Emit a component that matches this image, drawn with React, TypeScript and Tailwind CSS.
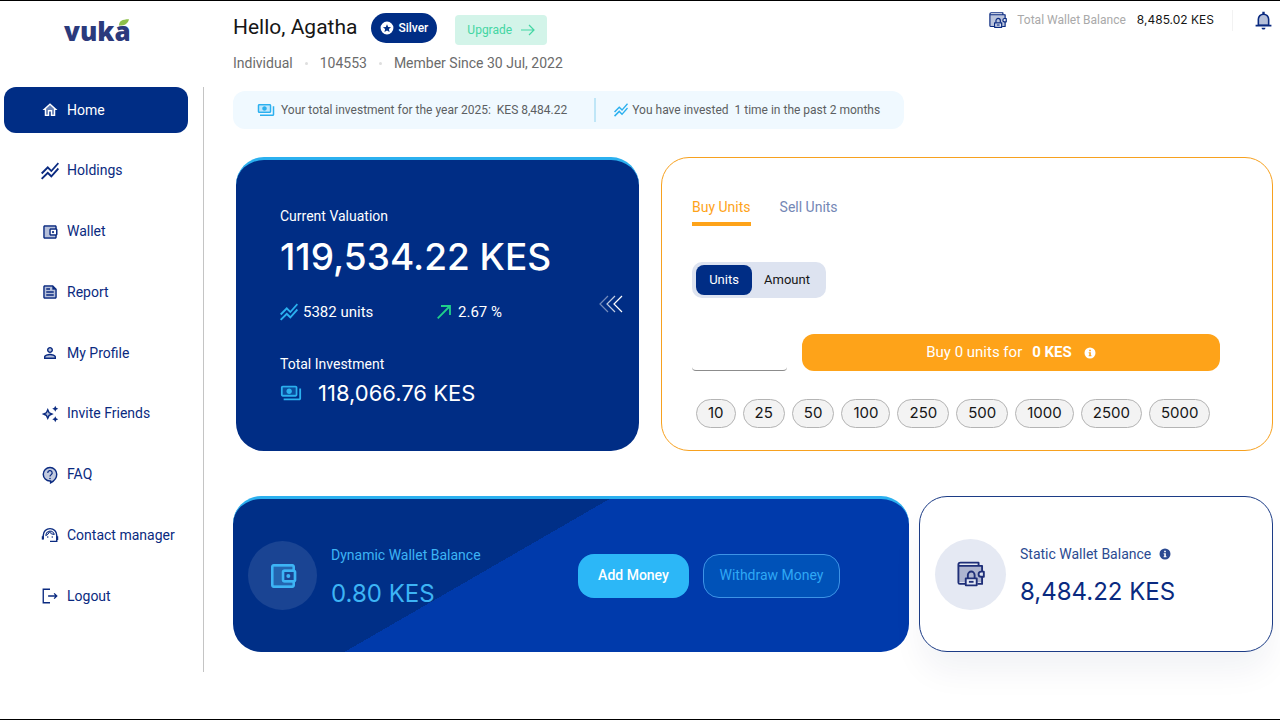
import { useState, type ReactNode } from 'react';

type IconProps = { className?: string };

function Svg({ className, children }: { className?: string; children: ReactNode }) {
  return (
    <svg viewBox="0 0 24 24" fill="currentColor" className={className} aria-hidden="true">
      {children}
    </svg>
  );
}

function HomeIcon({ className }: IconProps) {
  return (
    <Svg className={className}>
      <path opacity=".4" d="M12 5.7l-5 4.5V18h2v-6h6v6h2v-7.8z" />
      <path d="M12 3L2 12h3v8h6v-6h2v6h6v-8h3L12 3zm5 15h-2v-6H9v6H7v-7.81l5-4.5 5 4.5V18z" />
    </Svg>
  );
}

function ChartIcon({ className }: IconProps) {
  return (
    <svg viewBox="2 2 20 20" fill="currentColor" className={className} aria-hidden="true">
      <path d="M2 19.99l7.5-7.51 4 4 7.09-7.97L22 9.92l-8.5 9.56-4-4-6 6.01-1.5-1.5zm1.5-4.5l6-6.01 4 4L22 3.92l-1.41-1.41-7.09 7.97-4-4L2 13.99l1.5 1.5z" />
    </svg>
  );
}

function WalletIcon({ className }: IconProps) {
  return (
    <Svg className={className}>
      <path opacity=".3" d="M5 5v14h14v-2h-6a2 2 0 0 1-2-2V9c0-1.1.9-2 2-2h6V5z" />
      <path d="M21 7.28V5c0-1.1-.9-2-2-2H5c-1.11 0-2 .9-2 2v14c0 1.1.89 2 2 2h14c1.1 0 2-.9 2-2v-2.28c.59-.35 1-.98 1-1.72V9c0-.74-.41-1.38-1-1.72zM20 9v6h-7V9h7zM5 19V5h14v2h-6c-1.1 0-2 .9-2 2v6c0 1.1.9 2 2 2h6v2H5z" />
      <circle cx="16" cy="12" r="1.5" />
    </Svg>
  );
}

function ReportIcon({ className }: IconProps) {
  return (
    <Svg className={className}>
      <path opacity=".3" d="M5 5v14h14V9h-4V5z" />
      <path d="M16 3H5c-1.1 0-2 .9-2 2v14c0 1.1.9 2 2 2h14c1.1 0 2-.9 2-2V8l-5-5zm3 16H5V5h10v4h4v10zM7 17h10v-2H7v2zm5-10H7v2h5V7zm-5 6h10v-2H7v2z" />
    </Svg>
  );
}

function PersonIcon({ className }: IconProps) {
  return (
    <Svg className={className}>
      <path opacity=".3" d="M12 14c-3 0-6.500 1.500-6.500 3v1.500h13V17c0-1.500-3.500-3-6.500-3z" />
      <circle opacity=".3" cx="12" cy="8" r="2.500" />
      <path d="M12 5.900c1.160 0 2.100.94 2.100 2.100s-.94 2.100-2.100 2.100S9.900 9.160 9.900 8s.94-2.100 2.100-2.100m0 9c2.970 0 6.100 1.460 6.100 2.100v1.100H5.900V17c0-.64 3.130-2.100 6.100-2.100M12 4C9.790 4 8 5.790 8 8s1.790 4 4 4 4-1.790 4-4-1.790-4-4-4zm0 9c-2.670 0-8 1.340-8 4v3h16v-3c0-2.660-5.330-4-8-4z" />
    </Svg>
  );
}

function SparkleIcon({ className }: IconProps) {
  return (
    <Svg className={className}>
      <path opacity=".3" d="M9 8.800l1 2.200 2.200 1-2.200 1-1 2.200-1-2.200-2.200-1 2.200-1z" />
      <path d="M19 9l1.250-2.750L23 5l-2.750-1.250L19 1l-1.250 2.750L15 5l2.750 1.250L19 9zm0 6l-1.250 2.750L15 19l2.750 1.250L19 23l1.250-2.750L23 19l-2.750-1.250L19 15zm-7.500-5.500L9 4 6.500 9.500 1 12l5.500 2.500L9 20l2.500-5.500L17 12l-5.500-2.500zm-1.510 3.490L9 15.170l-.99-2.180L5.830 12l2.180-.99L9 8.830l.99 2.180 2.180.99-2.180.99z" />
    </Svg>
  );
}

function HelpIcon({ className }: IconProps) {
  return (
    <Svg className={className}>
      <path
        d="M12 2a9 9 0 1 0 0 18h.8v2.500c4.700-2.500 8.200-6.500 8.200-11.500a9 9 0 0 0-9-9z"
        fillOpacity=".25"
        stroke="currentColor"
        strokeWidth="1.900"
      />
      <path
        d="M9 9.200a2.950 2.950 0 1 1 4.500 2.400c-1 .600-1.500 1.200-1.500 2.400"
        fill="none"
        stroke="currentColor"
        strokeWidth="1.600"
      />
      <circle cx="12" cy="16.600" r="1.100" />
    </Svg>
  );
}

function AgentIcon({ className }: IconProps) {
  return (
    <Svg className={className}>
      <path opacity=".25" d="M6 12a6 6 0 0 1 12 0c-3 0-5-1.500-6-4-1 2.500-3 4-6 4z" />
      <g fill="none" stroke="currentColor" strokeWidth="1.900">
        <path d="M3 18v-5.500a9 9 0 0 1 18 0V20.500h-9" />
        <path d="M2 13.500v4.500M22 13.500v5" />
        <path d="M6.300 12.800a5.800 5.800 0 0 1 11.400-1.600c-3.200 0-5.400-1.400-6.400-3.600-.8 2.400-2.400 4.300-5 5.200z" strokeWidth="1.300" />
      </g>
      <circle cx="9" cy="14.500" r="1" />
      <circle cx="15" cy="14.500" r="1" />
    </Svg>
  );
}

function LogoutIcon({ className }: IconProps) {
  return (
    <Svg className={className}>
      <g fill="none" stroke="currentColor" strokeWidth="1.800">
        <path d="M12 3H3v18h9" />
        <path d="M9.500 12H21M17.500 8.500L21 12l-3.500 3.500" />
      </g>
    </Svg>
  );
}

function CashIcon({ className }: IconProps) {
  return (
    <Svg className={className}>
      <path opacity=".25" d="M3 6h14v8H3z" />
      <path d="M19 14V6c0-1.100-.9-2-2-2H3c-1.100 0-2 .9-2 2v8c0 1.100.9 2 2 2h14c1.100 0 2-.9 2-2zm-2 0H3V6h14v8zm-7-7c-1.660 0-3 1.340-3 3s1.340 3 3 3 3-1.340 3-3-1.340-3-3-3zm13 0v11c0 1.100-.9 2-2 2H4v-2h17V7h2z" />
    </Svg>
  );
}

function LockedWalletIcon({ className }: IconProps) {
  return (
    <Svg className={className}>
      <path opacity=".28" d="M1.500 4.500h20V19h-20z" />
      <g fill="none" stroke="currentColor" strokeWidth="1.600" strokeLinejoin="round">
        <path d="M7.500 20.500h-5a1.300 1.300 0 0 1-1.300-1.300V4c0-1 .8-1.700 1.800-1.700h15.500V5" />
        <path d="M1.500 5h20v5M21.500 14.500v6h-4" />
        <path d="M23 10h-2.300a2.200 2.200 0 0 0 0 4.400H23z" fill="#e3e8f4" />
        <path d="M9.300 15.500v-2.700a2.900 2.900 0 0 1 5.800 0v2.700" />
        <path d="M7.500 15.700h9.400v6H7.500z" fill="#e3e8f4" />
        <path d="M10.200 18.700h4" />
      </g>
    </Svg>
  );
}

function BellIcon({ className }: IconProps) {
  return (
    <Svg className={className}>
      <path
        d="M5.500 18v-7.500a6.500 6.500 0 0 1 13 0V18z"
        fillOpacity=".3"
        stroke="currentColor"
        strokeWidth="2"
      />
      <path d="M2 17.500h20v2.200H2zM10.500 1h3v3h-3zM9.500 21h5a2.500 2.500 0 0 1-5 0z" />
    </Svg>
  );
}

function StarIcon({ className }: IconProps) {
  return (
    <Svg className={className}>
      <path
        fillRule="evenodd"
        d="M12 1a11 11 0 1 0 0 22 11 11 0 0 0 0-22zm0 4.500l2 4.600 5 .4-3.800 3.300 1.200 4.900-4.400-2.600-4.400 2.600 1.200-4.900L5 10.500l5-.4z"
      />
    </Svg>
  );
}

function InfoIcon({ className }: IconProps) {
  return (
    <Svg className={className}>
      <path
        fillRule="evenodd"
        d="M12 1a11 11 0 1 0 0 22 11 11 0 0 0 0-22zM10.300 5.500h3.400v3h-3.400zM9.300 10.500h4.400v6h1.300v2H9.300v-2h1.200v-4H9.300z"
      />
    </Svg>
  );
}

function ArrowRight({ className }: IconProps) {
  return (
    <svg viewBox="0 0 14 12" fill="none" stroke="currentColor" strokeWidth="1.200" className={className} aria-hidden="true">
      <path d="M0 6h13M8 1l5 5-5 5" />
    </svg>
  );
}

function ArrowUpRight({ className }: IconProps) {
  return (
    <svg viewBox="0 0 14 14" fill="none" stroke="currentColor" strokeWidth="1.800" className={className} aria-hidden="true">
      <path d="M0.700 13.300L13 1M4 1h9v9" />
    </svg>
  );
}

function Collapse({ className }: IconProps) {
  return (
    <svg viewBox="0 0 24 18" fill="none" stroke="currentColor" strokeWidth="1.200" className={className} aria-hidden="true">
      <path opacity=".45" d="M9 1L1 9l8 8" />
      <path opacity=".75" d="M16 1L8 9l8 8" />
      <path d="M23 1l-8 8 8 8" />
    </svg>
  );
}

const links = [
  { label: 'Home', Icon: HomeIcon },
  { label: 'Holdings', Icon: ChartIcon },
  { label: 'Wallet', Icon: WalletIcon },
  { label: 'Report', Icon: ReportIcon },
  { label: 'My Profile', Icon: PersonIcon },
  { label: 'Invite Friends', Icon: SparkleIcon },
  { label: 'FAQ', Icon: HelpIcon },
  { label: 'Contact manager', Icon: AgentIcon },
  { label: 'Logout', Icon: LogoutIcon },
];

function Sidebar() {
  return (
    <aside className="flex w-[204px] shrink-0 flex-col">
      <div className="h-[86px] pl-16 pt-3">
        <a href="#home" className="relative inline-block font-['Open_Sans',sans-serif] text-[26px] font-extrabold leading-9 text-[#2b3a7c]">
          vuka
          <svg viewBox="0 0 10 7" className="absolute right-0.5 top-1.5 h-[7px] w-[10px]" aria-hidden="true">
            <path d="M0 6.500C0 2 3 .3 10 .2 9 4.500 5.500 6.800 0 6.500z" fill="#8dc04a" />
          </svg>
        </a>
      </div>
      <nav className="mb-[47px] flex flex-1 flex-col justify-between border-r border-[#c4c4c4] pb-[53px] pl-1 pr-[15px]">
        {links.map(({ label, Icon }) => (
          <a
            key={label}
            href={`#${label.toLowerCase().replace(' ', '-')}`}
            className={
              label === 'Home'
                ? 'flex h-[46px] items-center gap-2 rounded-xl bg-[#002d85] pl-[37px] text-[14px] text-white'
                : 'flex h-[46px] items-center gap-2 whitespace-nowrap pl-[37px] text-[14px] text-[#0a2a80]'
            }
          >
            <Icon className="size-[18px] shrink-0" />
            {label}
          </a>
        ))}
      </nav>
    </aside>
  );
}

function Header() {
  return (
    <header className="flex justify-between">
      <div>
        <div className="flex items-start">
          <h1 className="mt-[10px] text-[21px] leading-8 text-[#161616]">Hello, Agatha</h1>
          <span className="ml-[14px] mt-3 flex h-[30px] items-center gap-1 rounded-full bg-[#002d85] px-[9px] text-[12px] font-medium text-white">
            <StarIcon className="size-[14px]" />
            Silver
          </span>
          <button className="ml-[18px] mt-[14px] flex h-[30px] items-center gap-[9px] rounded bg-[#d3f4e9] px-3 text-[12px] text-[#43d6a3]">
            Upgrade
            <ArrowRight className="h-3 w-[14px]" />
          </button>
        </div>
        <div className="mt-2 flex items-center gap-3 text-[14px] leading-5 text-[#6b6b6b]">
          <span>Individual</span>
          <i className="size-[3px] rounded-full bg-[#dedede]" />
          <span>104553</span>
          <i className="size-[3px] rounded-full bg-[#dedede]" />
          <span>Member Since 30 Jul, 2022</span>
        </div>
      </div>
      <div className="flex h-[38px] items-center text-[12px]">
        <LockedWalletIcon className="size-[18px] text-[#0a2a80]" />
        <span className="ml-[10px] text-[#a9a9a9]">Total Wallet Balance</span>
        <span className="ml-[11px] font-[Inter,sans-serif] text-[#161616]">8,485.02 KES</span>
        <button aria-label="Notifications" className="ml-[18px] border-l border-[#f2f2f2] py-px pl-[21px]">
          <BellIcon className="size-[19px] text-[#0a2a80]" />
        </button>
      </div>
    </header>
  );
}

function InfoBar() {
  return (
    <div className="mt-[18px] flex h-[38px] w-fit items-center rounded-xl bg-[#f0f9ff] px-6 text-[12px] text-[#5c5f62]">
      <CashIcon className="size-[18px] text-[#2bb0ef]" />
      <span className="ml-[6px]">Your total investment for the year 2025:&nbsp; KES 8,484.22</span>
      <span className="ml-[27px] h-6 w-0.5 bg-[#bfe6f7]" />
      <ChartIcon className="ml-[18px] size-[14px] text-[#2bb0ef]" />
      <span className="ml-1">You have invested &nbsp;1 time in the past 2 months</span>
    </div>
  );
}

function ValuationCard() {
  return (
    <section className="flex items-center justify-between rounded-[28px] border-t-[3px] border-[#2bb0ef] bg-[#002d85] pl-11 pr-4 text-white">
      <div className="pt-1">
        <h2 className="text-[14px] leading-5">Current Valuation</h2>
        <p className="mt-2 font-[Inter,sans-serif] text-[37px] font-medium leading-[46px]">119,534.22 KES</p>
        <div className="mt-5 flex items-center text-[15px] leading-6">
          <ChartIcon className="size-[18px] text-[#2bb0ef]" />
          <span className="ml-[5px] w-[134px]">5382 units</span>
          <ArrowUpRight className="size-[14px] text-[#1fd08a]" />
          <span className="ml-[7px]">2.67 %</span>
        </div>
        <h2 className="mt-[30px] text-[14px] leading-5">Total Investment</h2>
        <p className="mt-[3px] flex items-center gap-4 font-[Inter,sans-serif] text-[22px] leading-8">
          <CashIcon className="size-[22px] text-[#2bb0ef]" />
          118,066.76 KES
        </p>
      </div>
      <button aria-label="Collapse" className="pb-1">
        <Collapse className="h-[18px] w-6" />
      </button>
    </section>
  );
}

const presets = [10, 25, 50, 100, 250, 500, 1000, 2500, 5000];

function TradeCard() {
  const [units, setUnits] = useState('');

  return (
    <section className="rounded-[28px] border border-[#f7a11f] pb-5 pl-[30px] pr-[52px] pt-[37px]">
      <div className="flex items-start gap-[29px] text-[14px] leading-6">
        <button className="border-b-4 border-[#fea319] pb-[3px] text-[#fea319]">Buy Units</button>
        <button className="text-[#7487b5]">Sell Units</button>
      </div>
      <div className="mt-9 flex h-9 w-fit items-center rounded-[10px] bg-[#dde3f0] px-1 text-[13px]">
        <button className="h-[30px] w-14 rounded-lg bg-[#002d85] text-white">Units</button>
        <button className="h-[30px] w-[70px] text-[#161616]">Amount</button>
      </div>
      <div className="mt-9 flex items-end gap-[15px]">
        <input
          aria-label="Units to buy"
          value={units}
          onChange={(e) => setUnits(e.target.value)}
          className="h-9 w-[95px] rounded-sm border-b border-[#8c8c8c] outline-none"
        />
        <button className="flex h-[37px] flex-1 items-center justify-center gap-[10px] rounded-xl bg-[#fea319] text-[15px] text-white">
          Buy {units || 0} units for
          <b>{units || 0} KES</b>
          <InfoIcon className="ml-0.5 size-3" />
        </button>
      </div>
      <div className="mt-7 flex gap-[7px] pl-1">
        {presets.map((n) => (
          <button
            key={n}
            onClick={() => setUnits(String(n))}
            className="h-[29px] rounded-full border border-[#b4b4b4] bg-[#f3f3f3] px-[11px] font-[Inter,sans-serif] text-[15px] text-[#161616]"
          >
            {n}
          </button>
        ))}
      </div>
    </section>
  );
}

function DynamicWallet() {
  return (
    <section className="flex h-[156px] items-center rounded-[28px] border-t-[3px] border-[#2bb0ef] bg-[linear-gradient(150deg,#002f87_40%,#003aab_40%)] pl-[15px] pr-[69px] text-[#3db4f5]">
      <span className="flex size-[69px] items-center justify-center rounded-full bg-white/10">
        <WalletIcon className="size-8" />
      </span>
      <div className="ml-[14px] flex-1 pt-1">
        <h2 className="text-[14px] leading-5">Dynamic Wallet Balance</h2>
        <p className="mt-[13px] font-[Inter,sans-serif] text-[24px] leading-8">0.80 KES</p>
      </div>
      <button className="h-11 w-[111px] rounded-2xl bg-[#2cb7f7] text-[14px] font-medium text-white">Add Money</button>
      <button className="ml-[14px] h-11 w-[137px] rounded-2xl border border-[#3d93e6] bg-[#0052b8] text-[14px] text-[#2fa8f5]">
        Withdraw Money
      </button>
    </section>
  );
}

function StaticWallet() {
  return (
    <section className="flex h-[156px] items-center rounded-[28px] border border-[#1c3c86] bg-white pl-[15px] shadow-[0_22px_34px_-4px_rgba(20,40,90,0.06)]">
      <span className="flex size-[71px] items-center justify-center rounded-full bg-[#e5e9f3]">
        <LockedWalletIcon className="size-7 text-[#1f2f78]" />
      </span>
      <div className="ml-[14px] pt-1">
        <h2 className="flex items-center gap-2 text-[14px] leading-5 text-[#2b4a91]">
          Static Wallet Balance
          <InfoIcon className="size-3" />
        </h2>
        <p className="mt-3 font-[Inter,sans-serif] text-[24px] leading-8 text-[#0a2a80]">8,484.22 KES</p>
      </div>
    </section>
  );
}

export default function App() {
  return (
    <div className="flex min-h-screen border-y border-black bg-white font-[Roboto,sans-serif]">
      <Sidebar />
      <main className="min-w-0 flex-1 pl-[29px] pr-[7px]">
        <Header />
        <InfoBar />
        <div className="mt-7 grid h-[294px] grid-cols-[403fr_612fr] gap-[22px] pl-[3px]">
          <ValuationCard />
          <TradeCard />
        </div>
        <div className="mt-[45px] grid grid-cols-[676fr_354fr] gap-[10px]">
          <DynamicWallet />
          <StaticWallet />
        </div>
      </main>
    </div>
  );
}
